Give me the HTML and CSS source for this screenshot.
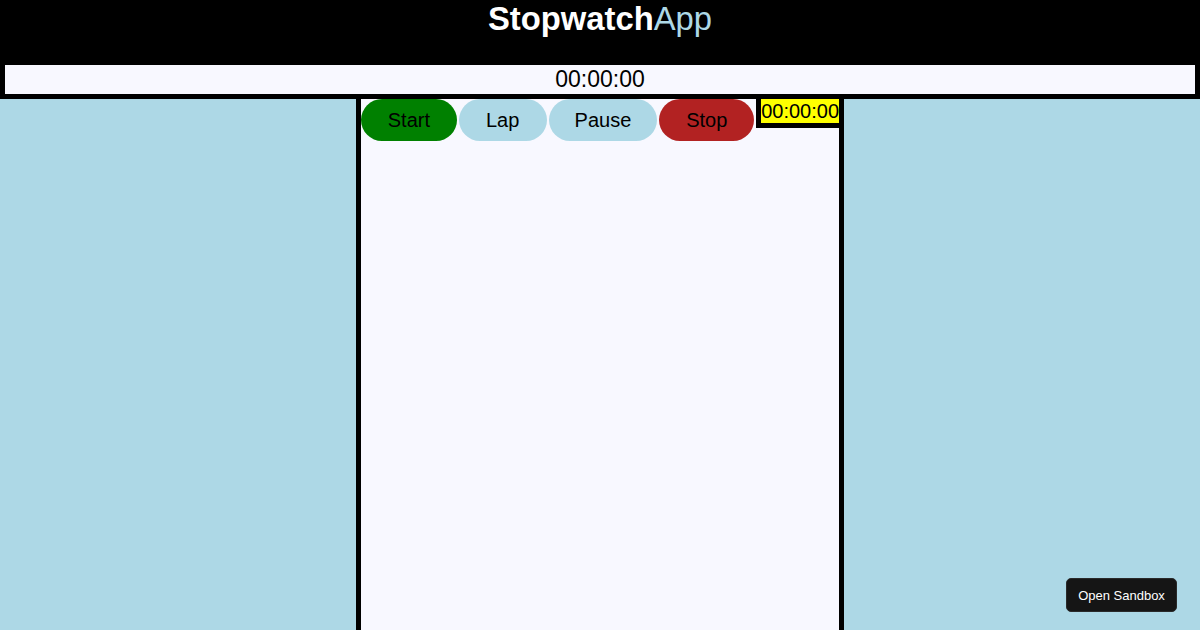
FILE: index.html
```html
<!DOCTYPE html>
<html lang="en">
<head>
<meta charset="utf-8">
<title>StopwatchApp</title>
<link rel="stylesheet" href="styles.css">
</head>
<body>
<header class="header">
  <h1 class="title"><span class="title-main">Stopwatch</span><span class="title-accent">App</span></h1>
  <div class="display">00:00:00</div>
</header>
<main class="column">
  <div class="controls">
    <button class="btn btn-start">Start</button>
    <button class="btn btn-lap">Lap</button>
    <button class="btn btn-pause">Pause</button>
    <button class="btn btn-stop">Stop</button>
    <div class="lap-time">00:00:00</div>
  </div>
</main>
<button class="sandbox">Open Sandbox</button>
</body>
</html>
```

FILE: styles.css
```css
html, body {
  margin: 0;
  padding: 0;
}
body {
  background: #add8e6;
  font-family: "Liberation Sans", Arial, sans-serif;
  min-height: 630px;
  display: flex;
  flex-direction: column;
}
.header {
  background: #000;
  padding: 0 5px 5px;
}
.title {
  margin: 0;
  font-size: 32.8px;
  line-height: 37px;
  text-align: center;
  font-weight: normal;
}
.title-main {
  color: #fff;
  font-weight: bold;
}
.title-accent {
  color: #add8e6;
}
.display {
  margin-top: 28px;
  background: #f8f8ff;
  height: 29px;
  line-height: 29px;
  text-align: center;
  font-size: 23px;
  color: #000;
}
.column {
  width: 478px;
  margin: 0 auto;
  flex: 1;
  background: #f8f8ff;
  border-left: 5px solid #000;
  border-right: 5px solid #000;
}
.controls {
  display: flex;
  align-items: flex-start;
  gap: 2px;
}
.btn {
  height: 42px;
  border: none;
  border-radius: 21px;
  padding: 0;
  font-family: "Liberation Sans", Arial, sans-serif;
  font-size: 20px;
  color: #000;
  margin: 0;
}
.btn-start { width: 96px; background: #008000; }
.btn-lap { width: 88px; background: #add8e6; }
.btn-pause { width: 109px; background: #add8e6; }
.btn-stop { width: 95px; background: #b22222; }
.lap-time {
  flex: 1;
  background: #ffff00;
  border-left: 5px solid #000;
  border-bottom: 5px solid #000;
  font-size: 20px;
  line-height: 24px;
  white-space: nowrap;
  overflow: visible;
  color: #000;
}
.sandbox {
  position: fixed;
  right: 23px;
  bottom: 18px;
  width: 111px;
  height: 34px;
  background: #151515;
  color: #fff;
  border: 1px solid #2a2a2a;
  border-radius: 5px;
  font-family: "Liberation Sans", Arial, sans-serif;
  font-size: 13px;
  padding: 0;
}
```
